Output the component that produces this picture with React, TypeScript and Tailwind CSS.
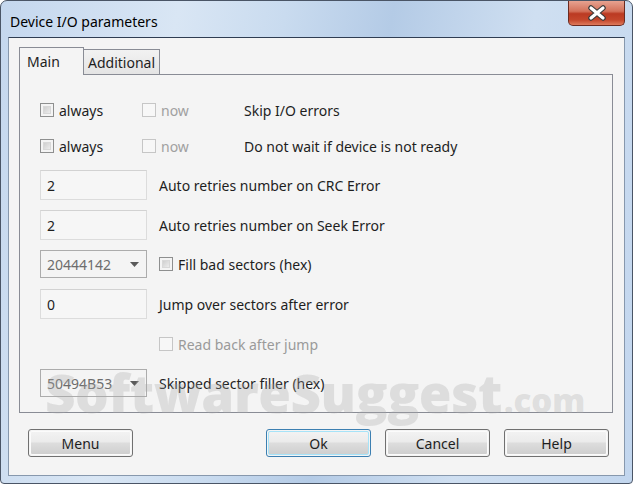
import React from 'react';

const font = { fontFamily: '"Noto Sans", "Open Sans", sans-serif' };

function Check({ disabled = false }: { disabled?: boolean }) {
  return disabled ? (
    <span className="block w-[14px] h-[14px] shrink-0 border border-[#c6c6c6] bg-[#f7f7f7]" />
  ) : (
    <span className="block w-[14px] h-[14px] shrink-0 border border-[#8e8f8f] bg-[#f4f4f4] p-[2px]">
      <span className="block w-full h-full bg-[linear-gradient(135deg,#cfcfcf,#ececec)] border border-[#d8d8d8]" />
    </span>
  );
}

function TextBox({ value }: { value: string }) {
  return (
    <div className="w-[107px] h-[30px] shrink-0 border border-[#dcdcdc] border-t-[#d2d2d2] bg-[#f6f6f6] flex items-center pl-[6px] text-[#1e1e1e]">
      {value}
    </div>
  );
}

function Combo({ value }: { value: string }) {
  return (
    <div className="w-[107px] h-[28px] shrink-0 border border-[#acacac] bg-[#f4f4f4] flex items-center pl-[6px] pr-[7px] justify-between text-[#6d6d6d]">
      <span>{value}</span>
      <svg width="9" height="5" viewBox="0 0 9 5">
        <path d="M0 0h9L4.5 5z" fill="#5a5a5a" />
      </svg>
    </div>
  );
}

function Btn({ label, primary = false }: { label: string; primary?: boolean }) {
  return (
    <div
      className={`w-[105px] h-[28px] rounded-[3px] border ${
        primary ? 'border-[#3c7fb1]' : 'border-[#707070]'
      } p-px`}
    >
      <div
        className={`w-full h-full rounded-[2px] border ${
          primary ? 'border-[#a6e3f8]' : 'border-[#fbfbfb]'
        } bg-[linear-gradient(180deg,#f2f2f2_0%,#ebebeb_45%,#dddddd_50%,#cfcfcf_100%)] flex items-center justify-center text-[#1e1e1e]`}
      >
        {label}
      </div>
    </div>
  );
}

export default function App() {
  return (
    <div
      style={font}
      className="relative w-[633px] h-[484px] rounded-t-[7px] rounded-b-[4px] border border-[#4a5566] bg-[linear-gradient(100deg,#c4d7ee_0%,#d9e6f4_25%,#c9dbef_40%,#b4cbe6_55%,#cfdff1_75%,#c2d6ee_100%)] flex flex-col px-[7px] pb-[7px] text-[14px] overflow-hidden"
    >
      {/* title bar */}
      <div className="h-[36px] flex items-start justify-between">
        <span className="mt-[10px] ml-[2px] text-[14px] text-black">Device I/O parameters</span>
        <div className="w-[57px] h-[26px] -mt-px rounded-b-[5px] border border-[#6b2a20] border-t-0 bg-[linear-gradient(180deg,#e9a796_0%,#d3715a_45%,#bb3a22_55%,#c4472c_80%,#de7a5c_100%)] flex items-center justify-center">
          <svg width="24" height="16" viewBox="0 0 24 16">
            <path d="M6 3l12 10M18 3L6 13" stroke="#3b3b3b" strokeWidth="5.5" strokeLinecap="round" />
            <path d="M6 3l12 10M18 3L6 13" stroke="#ffffff" strokeWidth="3.2" strokeLinecap="round" />
          </svg>
        </div>
      </div>

      {/* client */}
      <div className="flex-1 border border-[#8798ad] border-t-[#2f3d52] bg-[#f4f4f4] flex flex-col pl-[10px] pr-[11px] pt-[9px]">
        {/* tabs */}
        <div className="flex items-end h-[27px] relative z-10">
          <div className="w-[65px] h-[28px] -mb-px border border-[#898c95] border-b-0 bg-[#f4f4f4] pl-[7px] pt-[3px] text-[#1e1e1e]">
            Main
          </div>
          <div className="w-[76px] h-[25px] border border-[#898c95] border-l-0 border-b-0 bg-[linear-gradient(180deg,#f2f2f2,#e4e4e4)] pl-[4px] pt-[2px] text-[#1e1e1e]">
            Additional
          </div>
        </div>

        {/* panel */}
        <div className="h-[339px] border border-[#898c95] bg-[#f4f4f4] pl-[20px] pt-[25px] flex flex-col text-[#1e1e1e]">
          <div className="h-[20px] flex items-center">
            <div className="w-[102px] flex items-center gap-[5px]">
              <Check />
              <span>always</span>
            </div>
            <div className="w-[102px] flex items-center gap-[5px] text-[#a0a0a0]">
              <Check disabled />
              <span>now</span>
            </div>
            <span>Skip I/O errors</span>
          </div>

          <div className="h-[20px] mt-[16px] flex items-center">
            <div className="w-[102px] flex items-center gap-[5px]">
              <Check />
              <span>always</span>
            </div>
            <div className="w-[102px] flex items-center gap-[5px] text-[#a0a0a0]">
              <Check disabled />
              <span>now</span>
            </div>
            <span>Do not wait if device is not ready</span>
          </div>

          <div className="mt-[14px] flex items-center gap-[12px]">
            <TextBox value="2" />
            <span>Auto retries number on CRC Error</span>
          </div>

          <div className="mt-[10px] flex items-center gap-[12px]">
            <TextBox value="2" />
            <span>Auto retries number on Seek Error</span>
          </div>

          <div className="mt-[10px] flex items-center gap-[12px]">
            <Combo value="20444142" />
            <div className="flex items-center gap-[5px]">
              <Check />
              <span>Fill bad sectors (hex)</span>
            </div>
          </div>

          <div className="mt-[11px] flex items-center gap-[12px]">
            <TextBox value="0" />
            <span>Jump over sectors after error</span>
          </div>

          <div className="h-[20px] mt-[15px] pl-[119px] flex items-center gap-[5px] text-[#9a9a9a]">
            <Check disabled />
            <span>Read back after jump</span>
          </div>

          <div className="mt-[15px] flex items-center gap-[12px]">
            <Combo value="50494B53" />
            <span>Skipped sector filler (hex)</span>
          </div>
        </div>

        {/* buttons */}
        <div className="mt-[16px] -ml-[10px] pl-[19px] flex items-center">
          <Btn label="Menu" />
          <div className="ml-[133px]">
            <Btn label="Ok" primary />
          </div>
          <div className="ml-[14px]">
            <Btn label="Cancel" />
          </div>
          <div className="ml-[14px]">
            <Btn label="Help" />
          </div>
        </div>
      </div>

      {/* watermark */}
      <div
        style={{ fontFamily: '"Open Sans", "Noto Sans", sans-serif' }}
        className="pointer-events-none absolute left-[44px] top-[352px] flex items-baseline text-[rgba(170,170,170,0.3)] font-extrabold"
      >
        <span className="text-[53px] tracking-[-0.5px]">SoftwareSuggest</span>
        <span className="text-[33px] ml-[2px]">.com</span>
      </div>
    </div>
  );
}
